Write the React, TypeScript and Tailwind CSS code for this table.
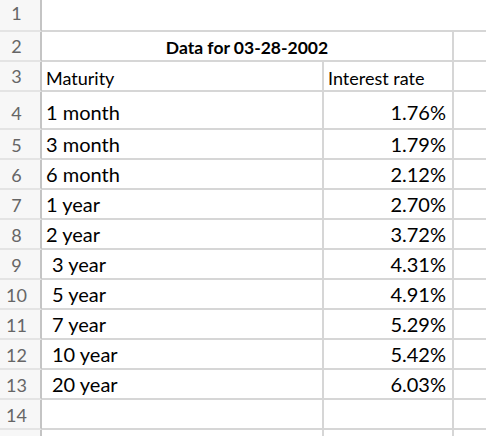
import React from "react";

const rows: { n: number; h: string; label: string; indent?: boolean; rate: string }[] = [
  { n: 4, h: "h-[38px]", label: "1 month", rate: "1.76%" },
  { n: 5, h: "h-[30px]", label: "3 month", rate: "1.79%" },
  { n: 6, h: "h-[30px]", label: "6 month", rate: "2.12%" },
  { n: 7, h: "h-[30px]", label: "1 year", rate: "2.70%" },
  { n: 8, h: "h-[30px]", label: "2 year", rate: "3.72%" },
  { n: 9, h: "h-[30px]", label: "3 year", indent: true, rate: "4.31%" },
  { n: 10, h: "h-[30px]", label: "5 year", indent: true, rate: "4.91%" },
  { n: 11, h: "h-[30px]", label: "7 year", indent: true, rate: "5.29%" },
  { n: 12, h: "h-[30px]", label: "10 year", indent: true, rate: "5.42%" },
  { n: 13, h: "h-[30px]", label: "20 year", indent: true, rate: "6.03%" },
];

function Hdr({ n, pb }: { n: number; pb: string }) {
  return (
    <div
      className={`w-[42px] shrink-0 flex items-end justify-center pr-[7px] ${pb} bg-[#f7f7f7] border-r-2 border-r-[#c4c4c4] border-b-2 border-b-[#e4e4e4] text-[18px] leading-none text-[#666]`}
    >
      {n}
    </div>
  );
}

export default function App() {
  return (
    <div
      className="w-[486px] h-[436px] overflow-hidden bg-white text-black"
      style={{ fontFamily: "Lato, 'Liberation Sans', sans-serif" }}
    >
      {/* Row 1 */}
      <div className="flex h-[32px]">
        <Hdr n={1} pb="pb-[8px]" />
        <div className="flex-1 border-b-2 border-[#d6d6d6]" />
      </div>
      {/* Row 2 */}
      <div className="flex h-[30px]">
        <Hdr n={2} pb="pb-[5px]" />
        <div className="w-[412px] shrink-0 flex items-end justify-center pb-[4px] border-b-2 border-r-2 border-[#d6d6d6] text-[17.5px] leading-none font-bold">
          Data for 03-28-2002
        </div>
        <div className="flex-1 border-b-2 border-[#d6d6d6]" />
      </div>
      {/* Row 3 */}
      <div className="flex h-[30px]">
        <Hdr n={3} pb="pb-[5px]" />
        <div className="w-[282px] shrink-0 flex items-end pl-[4px] pb-[3px] border-b-2 border-r-2 border-[#d6d6d6] text-[18px] leading-none">
          Maturity
        </div>
        <div className="w-[130px] shrink-0 flex items-end pl-[4px] pb-[3px] border-b-2 border-r-2 border-[#d6d6d6] text-[18px] leading-none">
          Interest rate
        </div>
        <div className="flex-1 border-b-2 border-[#d6d6d6]" />
      </div>
      {rows.map((r, i) => (
        <div key={r.n} className={`flex ${r.h}`}>
          <Hdr n={r.n} pb={i === 0 ? "pb-[6px]" : "pb-[4px]"} />
          <div
            className={`w-[282px] shrink-0 flex items-end ${r.indent ? "pl-[10px]" : "pl-[4px]"} ${i === 0 ? "pb-[6px]" : "pb-[4px]"} border-b-2 border-r-2 border-[#d6d6d6] text-[20px] leading-none`}
          >
            {r.label}
          </div>
          <div
            className={`w-[130px] shrink-0 flex items-end justify-end pr-[6px] ${i === 0 ? "pb-[6px]" : "pb-[4px]"} border-b-2 border-r-2 border-[#d6d6d6] text-[20px] leading-none`}
          >
            {r.rate}
          </div>
          <div className="flex-1 border-b-2 border-[#d6d6d6]" />
        </div>
      ))}
      {/* Row 14 */}
      <div className="flex h-[30px]">
        <Hdr n={14} pb="pb-[4px]" />
        <div className="w-[282px] shrink-0 border-b-2 border-r-2 border-[#d6d6d6]" />
        <div className="w-[130px] shrink-0 border-b-2 border-r-2 border-[#d6d6d6]" />
        <div className="flex-1 border-b-2 border-[#d6d6d6]" />
      </div>
      {/* Row 15 partial */}
      <div className="flex h-[30px]">
        <div className="w-[42px] shrink-0 bg-[#f7f7f7] border-r-2 border-r-[#c4c4c4]" />
        <div className="w-[282px] shrink-0 border-r-2 border-[#d6d6d6]" />
        <div className="w-[130px] shrink-0 border-r-2 border-[#d6d6d6]" />
        <div className="flex-1" />
      </div>
    </div>
  );
}
